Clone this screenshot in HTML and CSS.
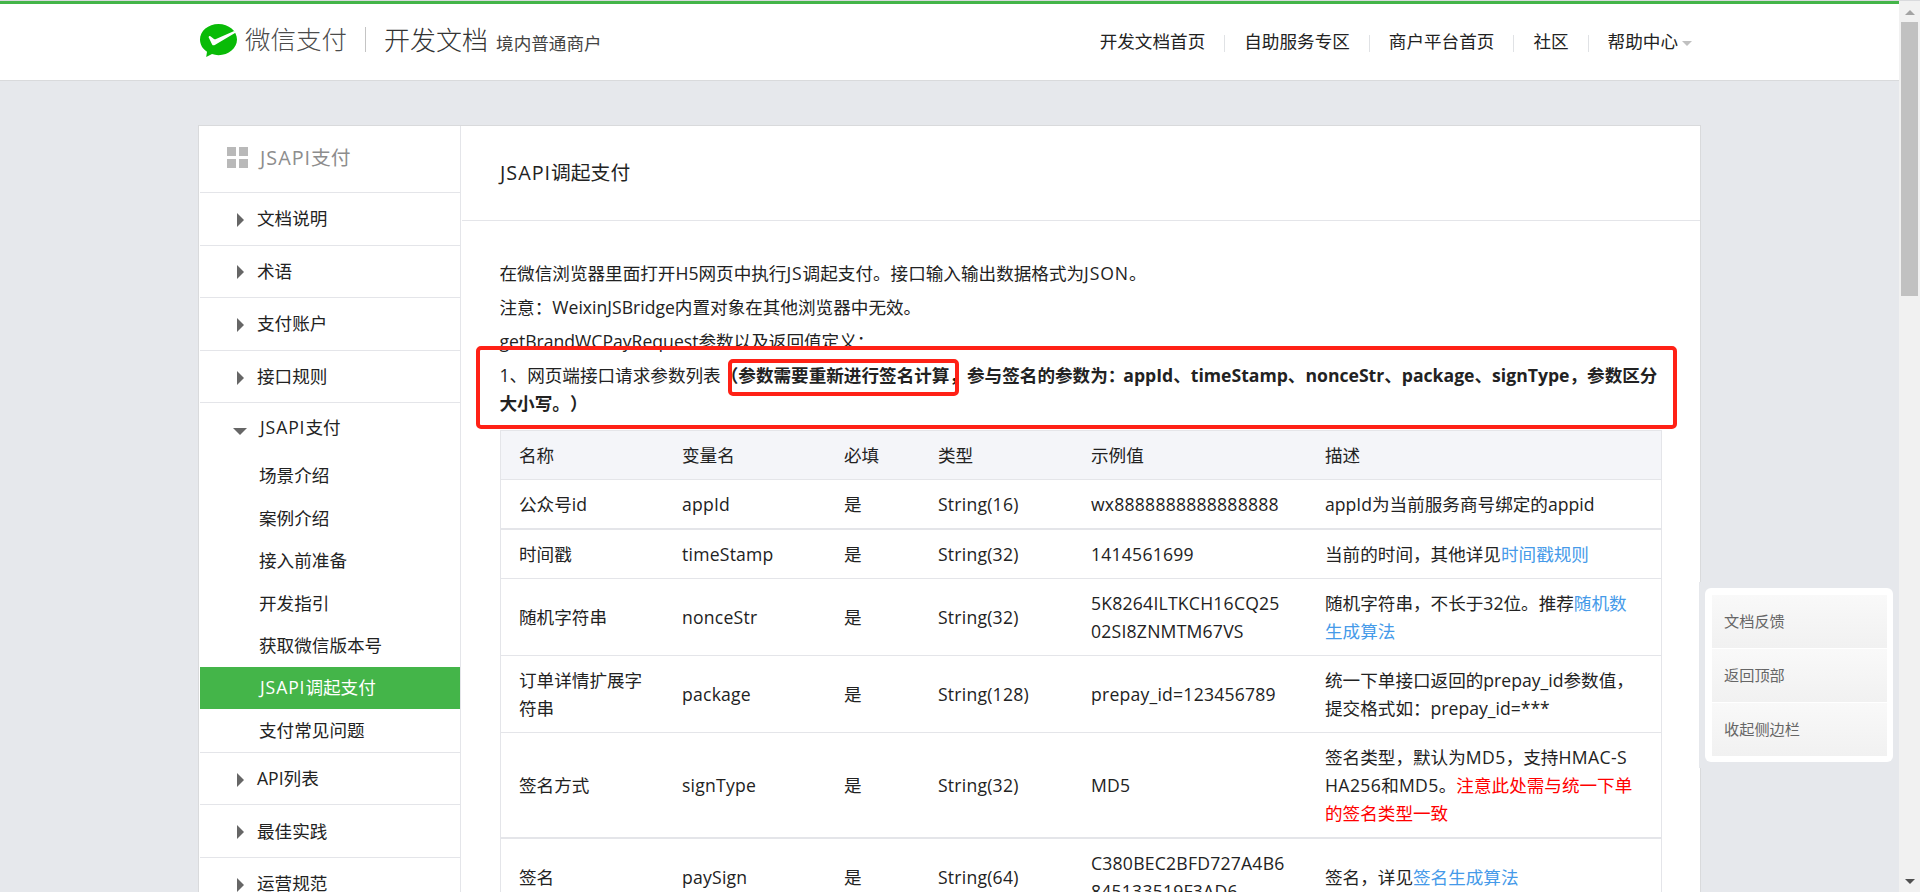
FILE: index.html
```html
<!DOCTYPE html>
<html lang="zh-CN">
<head>
    <meta charset="UTF-8">
    <title>JSAPI调起支付 - 微信支付开发文档</title>
    <link rel="stylesheet" href="styles.css">
</head>
<body>

    <div class="page">
        <!-- Header -->
        <header class="header">
            <div class="logo">
                <svg class="logo-icon" viewBox="0 0 37 33" width="37" height="33">
                    <path fill="#09bb07" d="M18.5 0C8.3 0 0 6.900 0 15.600c0 5 2.600 9.300 7 12.200L6.200 33l5.800-2.900c2 .7 4.200 1.100 6.500 1.100C28.700 31.200 37 24.300 37 15.600S28.700 0 18.500 0z"/>
                    <path fill="#fff" d="M8.600 13.200c.2-1.200 1-1.400 1.800-.9l3.600 2.700c.7.400 1.300.4 2 .1L34.200 7l1.200 1.800-20.600 12.100c-1 .6-2.200.5-2.700-.5z"/>
                </svg>
                <span class="logo-name">微信支付</span>
                <span class="logo-line"></span>
                <span class="logo-doc">开发文档</span>
                <span class="logo-type">境内普通商户</span>
            </div>
            <nav class="nav">
                <a>开发文档首页</a>
                <a>自助服务专区</a>
                <a>商户平台首页</a>
                <a>社区</a>
                <a>帮助中心<i class="nav-arrow"></i></a>
            </nav>
        </header>

        <div class="container">
            <!-- Sidebar -->
            <aside class="sidebar">
                <div class="sidebar-title">
                    <span class="grid-icon"><i></i><i></i><i></i><i></i></span>
                    <span class="api">JSAPI</span>支付
                </div>
                <div class="menu-item"><i class="arrow-right"></i>文档说明</div>
                <div class="menu-item"><i class="arrow-right"></i>术语</div>
                <div class="menu-item"><i class="arrow-right"></i>支付账户</div>
                <div class="menu-item"><i class="arrow-right"></i>接口规则</div>
                <div class="menu-group">
                    <div class="menu-open"><i class="arrow-down"></i><span class="api">JSAPI</span>支付</div>
                    <ul class="submenu">
                        <li>场景介绍</li>
                        <li>案例介绍</li>
                        <li>接入前准备</li>
                        <li>开发指引</li>
                        <li>获取微信版本号</li>
                        <li class="active"><span class="api">JSAPI</span>调起支付</li>
                        <li>支付常见问题</li>
                    </ul>
                </div>
                <div class="menu-item"><i class="arrow-right"></i>API列表</div>
                <div class="menu-item"><i class="arrow-right"></i>最佳实践</div>
                <div class="menu-item"><i class="arrow-right"></i>运营规范</div>
            </aside>

            <!-- Document -->
            <main class="main">
                <h1 class="main-title"><span class="api">JSAPI</span>调起支付</h1>
                <div class="doc">
                    <p>在微信浏览器里面打开H5网页中执行<span class="api">JS</span>调起支付。接口输入输出数据格式为<span class="api">JSON</span>。</p>
                    <p>注意：WeixinJSBridge内置对象在其他浏览器中无效。</p>
                    <p>getBrandWCPayRequest参数以及返回值定义：</p>
                    <p class="params">1、网页端接口请求参数列表<b>（参数需要重新进行签名计算，参与签名的参数为：<span class="names">appId、timeStamp、nonceStr、package、signType，</span>参数区分<br>大小写。）</b></p>

                    <table class="param-table">
                        <colgroup>
                            <col class="col-name"><col class="col-var"><col class="col-must"><col class="col-type"><col class="col-demo"><col class="col-desc">
                        </colgroup>
                        <tr class="head"><th>名称</th><th>变量名</th><th>必填</th><th>类型</th><th>示例值</th><th>描述</th></tr>
                        <tr class="row1 thick"><td>公众号id</td><td>appId</td><td>是</td><td>String(16)</td><td>wx8888888888888888</td><td>appId为当前服务商号绑定的appid</td></tr>
                        <tr class="row1"><td>时间戳</td><td>timeStamp</td><td>是</td><td>String(32)</td><td>1414561699</td><td>当前的时间，其他详见<a>时间戳规则</a></td></tr>
                        <tr class="row2"><td>随机字符串</td><td>nonceStr</td><td>是</td><td>String(32)</td><td>5K8264ILTKCH16CQ25<br>02SI8ZNMTM67VS</td><td>随机字符串，不长于32位。推荐<a>随机数<br>生成算法</a></td></tr>
                        <tr class="row2"><td>订单详情扩展字<br>符串</td><td>package</td><td>是</td><td>String(128)</td><td>prepay_id=123456789</td><td>统一下单接口返回的prepay_id参数值，<br>提交格式如：prepay_id=***</td></tr>
                        <tr class="row3 thick"><td>签名方式</td><td>signType</td><td>是</td><td>String(32)</td><td>MD5</td><td>签名类型，默认为<span class="algo">MD5</span>，支持<span class="algo">HMAC-S</span><br><span class="algo">HA256</span>和<span class="algo">MD5</span>。<em>注意此处需与统一下单<br>的签名类型一致</em></td></tr>
                        <tr class="row2"><td>签名</td><td>paySign</td><td>是</td><td>String(64)</td><td>C380BEC2BFD727A4B6<br>845133519F3AD6</td><td>签名，详见<a>签名生成算法</a></td></tr>
                    </table>
                </div>
            </main>
        </div>
    </div>

    <!-- Highlight boxes over the paragraph -->
    <div class="mark mark-outer"></div>
    <div class="mark mark-inner"></div>

    <!-- Floating tools -->
    <div class="tools">
        <ul>
            <li>文档反馈</li>
            <li>返回顶部</li>
            <li>收起侧边栏</li>
        </ul>
    </div>

    <!-- Scrollbar -->
    <div class="scrollbar">
        <i class="scroll-up"></i>
        <div class="scroll-thumb"></div>
        <i class="scroll-down"></i>
    </div>

</body>
</html>
```
FILE: styles.css
```css
* {
    box-sizing: border-box;
}

body {
    margin: 0;
    height: 892px;
    display: flex;
    overflow: hidden;
    background: #e6e8ec;
    color: #222;
    font-family: "Open Sans", "Noto Sans CJK SC", sans-serif;
    font-size: 17.6px;
    line-height: 28px;
    white-space: nowrap;
    text-spacing-trim: space-all;
}

ul {
    list-style: none;
    margin: 0;
    padding: 0;
}

.page {
    width: 1899px;
    height: 892px;
    border-top: 1px solid #d9dadd;
    overflow: hidden;
}

.api {
    letter-spacing: 0.05em;
}

/* Header */
.header {
    height: 80px;
    padding: 0 207px 0 200px;
    display: flex;
    justify-content: space-between;
    background: #fff;
    border-top: 3px solid #44b549;
    border-bottom: 1px solid #d9dadc;
}

.logo {
    display: flex;
    align-items: flex-start;
    padding-top: 20px;
    color: #4b4b4b;
    font-weight: 300;
}

.logo-name {
    margin: 1px 0 0 8px;
    font-size: 25.5px;
    line-height: 28px;
}

.logo-line {
    width: 1px;
    height: 25px;
    margin: 3px 18px 0 18px;
    background: #c4c4c4;
}

.logo-doc {
    margin-top: 2px;
    font-size: 26px;
    line-height: 28px;
    color: #333;
}

.logo-type {
    margin: 5px 0 0 8px;
    font-size: 17.6px;
    color: #444;
    font-weight: 400;
}

.nav {
    display: flex;
    padding-top: 23px;
}

.nav a {
    position: relative;
    padding-left: 39px;
}

.nav a + a::before {
    content: "";
    position: absolute;
    left: 19px;
    top: 8px;
    width: 1px;
    height: 17px;
    background: #e0e2e5;
}

.nav-arrow {
    display: inline-block;
    margin-left: 4px;
    vertical-align: 2px;
    border: 5px solid transparent;
    border-top-color: #c0c0c0;
    border-bottom: 0;
}

/* Layout */
.container {
    width: 1503px;
    height: 900px;
    margin: 44px 0 0 198px;
    padding-left: 1px;
    display: flex;
    background: #fff;
    border: 1px solid #d9dadc;
}

/* Sidebar */
.sidebar {
    width: 261px;
    border-right: 1px solid #e4e5e9;
}

.sidebar-title {
    height: 67px;
    padding: 0 0 3px 27px;
    display: flex;
    align-items: center;
    border-bottom: 1px solid #e4e5e9;
    color: #8d8d8d;
    font-size: 19.8px;
}

.grid-icon {
    width: 21px;
    margin-right: 12px;
    display: grid;
    grid-template-columns: 9px 9px;
    gap: 3px;
}

.grid-icon i {
    height: 9px;
    background: #b9b9b9;
}

.menu-item {
    height: 52.6px;
    padding: 0 0 1px 37px;
    display: flex;
    align-items: center;
    border-bottom: 1px solid #e4e5e9;
}

.arrow-right {
    margin: 3px 13px 0 0;
    border: 7px solid transparent;
    border-left-color: #666;
    border-right: 0;
}

.menu-group {
    border-bottom: 1px solid #e4e5e9;
}

.menu-open {
    height: 51px;
    padding: 0 0 3px 33px;
    display: flex;
    align-items: center;
}

.arrow-down {
    margin: 9px 13px 0 0;
    border: 7px solid transparent;
    border-top-color: #666;
    border-bottom: 0;
}

.submenu li {
    height: 42.5px;
    padding-left: 59px;
    line-height: 42px;
}

.submenu .active {
    padding-left: 60px;
    line-height: 41px;
    background: #44b549;
    color: #fff;
}

/* Document */
.main {
    flex: 1;
    padding-left: 1px;
}

.main-title {
    height: 95px;
    margin: 0;
    padding-left: 38px;
    line-height: 94px;
    font-size: 19.8px;
    font-weight: 400;
    border-bottom: 1px solid #e4e5e9;
}

.doc {
    padding: 38px 0 0 38px;
}

.doc p {
    margin: 0 0 6px -0.5px;
}

.doc .params {
    margin-bottom: 13px;
}

.names {
    margin-left: -2px;
}

/* Parameter table */
.param-table {
    width: 1162px;
    table-layout: fixed;
    border-collapse: separate;
    border-spacing: 0;
    border: 1px solid #e4e5e9;
    border-bottom: 0;
}

.col-name { width: 163px; }
.col-var { width: 162px; }
.col-must { width: 94px; }
.col-type { width: 153px; }
.col-demo { width: 234px; }

.param-table th,
.param-table td {
    padding: 0 0 0 18px;
    text-align: left;
    font-weight: 400;
    border-bottom: 1px solid #e4e5e9;
}

.param-table td:nth-child(2),
.param-table td:nth-child(4),
.param-table td:nth-child(5) {
    letter-spacing: 0.22px;
}

.algo {
    letter-spacing: 0.4px;
}

.param-table .thick td {
    border-bottom-width: 2px;
}

.param-table .head {
    height: 49px;
    background: #f4f5f9;
}

.row1 { height: 49.5px; }
.row2 { height: 77px; }
.row3 { height: 106px; }

.param-table a {
    color: #459ae9;
}

.param-table em {
    color: #f00;
    font-style: normal;
}

/* Highlight boxes */
.mark {
    position: absolute;
    border: 4px solid #ff2116;
    border-radius: 5px;
}

.mark-outer {
    left: 476px;
    top: 346px;
    width: 1201px;
    height: 83px;
}

.mark-inner {
    left: 728px;
    top: 359px;
    width: 231px;
    height: 37px;
}

/* Floating tools */
.tools {
    position: absolute;
    left: 1699px;
    top: 582px;
    padding: 6px;
    background: #e6e8ec;
}

.tools ul {
    width: 188px;
    height: 174px;
    padding: 6px 6px 6px 7px;
    background: #fff;
    border-radius: 6px;
}

.tools li {
    height: 54px;
    padding-left: 12px;
    line-height: 53px;
    font-size: 15.2px;
    color: #666;
    background: linear-gradient(#f9f9f9, #f1f1f1);
    border-top: 1px solid #fff;
}

/* Scrollbar */
.scrollbar {
    width: 21px;
    height: 892px;
    display: flex;
    flex-direction: column;
    align-items: center;
    background: #f1f1f1;
    border-top: 1px solid #d9dadd;
}

.scroll-up {
    margin: 9px 0 7px;
    border: 5px solid transparent;
    border-bottom-color: #a3a3a3;
    border-top: 0;
}

.scroll-thumb {
    width: 17px;
    height: 274px;
    background: #c1c1c1;
}

.scroll-down {
    margin-top: auto;
    margin-bottom: 8px;
    border: 5px solid transparent;
    border-top-color: #505050;
    border-bottom: 0;
}
```
